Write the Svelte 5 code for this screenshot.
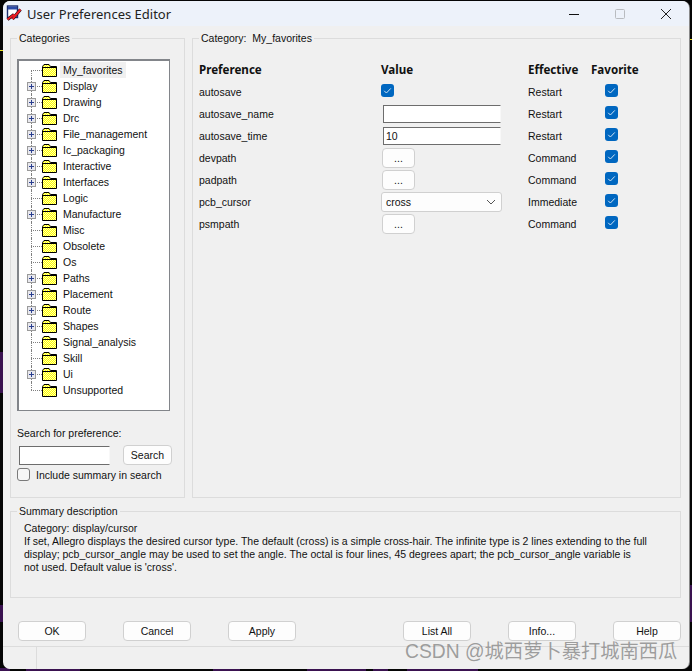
<script lang="ts">
	const categories = [
		{ name: 'My_favorites', expandable: false, selected: true },
		{ name: 'Display', expandable: true },
		{ name: 'Drawing', expandable: true },
		{ name: 'Drc', expandable: true },
		{ name: 'File_management', expandable: true },
		{ name: 'Ic_packaging', expandable: true },
		{ name: 'Interactive', expandable: true },
		{ name: 'Interfaces', expandable: true },
		{ name: 'Logic', expandable: false },
		{ name: 'Manufacture', expandable: true },
		{ name: 'Misc', expandable: false },
		{ name: 'Obsolete', expandable: false },
		{ name: 'Os', expandable: false },
		{ name: 'Paths', expandable: true },
		{ name: 'Placement', expandable: true },
		{ name: 'Route', expandable: true },
		{ name: 'Shapes', expandable: true },
		{ name: 'Signal_analysis', expandable: false },
		{ name: 'Skill', expandable: false },
		{ name: 'Ui', expandable: true },
		{ name: 'Unsupported', expandable: false }
	];

	const prefs = [
		{ name: 'autosave', kind: 'check', effective: 'Restart' },
		{ name: 'autosave_name', kind: 'text', value: '', effective: 'Restart' },
		{ name: 'autosave_time', kind: 'text', value: '10', effective: 'Restart' },
		{ name: 'devpath', kind: 'browse', effective: 'Command' },
		{ name: 'padpath', kind: 'browse', effective: 'Command' },
		{ name: 'pcb_cursor', kind: 'select', value: 'cross', effective: 'Immediate' },
		{ name: 'psmpath', kind: 'browse', effective: 'Command' }
	];
</script>

{#snippet checkmark()}
	<span class="check">
		<svg width="13" height="13" viewBox="0 0 13 13">
			<path d="M3.2 6.8 L5.4 9 L9.8 4.4" fill="none" stroke="#cfe3f5" stroke-width="1" />
		</svg>
	</span>
{/snippet}

<div class="desktop">
	<div class="window">
		<header class="titlebar">
			<svg class="app-icon" width="18" height="18" viewBox="0 0 18 18">
				<rect x="1.5" y="1" width="10" height="11.5" fill="#fff" stroke="#1c2f6e" stroke-width="1.4" />
				<rect x="2" y="1.5" width="9" height="3" fill="#2c4aa8" />
				<path d="M1.5 14.5 L8 9.5 M6.5 14 L14.5 4.5" fill="none" stroke="#1a1016" stroke-width="3.2" />
				<path d="M1.5 14.5 L8 9.5 M6.5 14 L14.5 4.5" fill="none" stroke="#ee1c24" stroke-width="2" />
			</svg>
			<span class="title">User Preferences Editor</span>
			<div class="controls">
				<svg width="12" height="12" viewBox="0 0 12 12"><path d="M1 6.5 H11" stroke="#111" stroke-width="1" /></svg>
				<svg width="12" height="12" viewBox="0 0 12 12"><rect x="1.5" y="1.5" width="9" height="9" rx="1" fill="none" stroke="#b9bcc0" /></svg>
				<svg width="12" height="12" viewBox="0 0 12 12"><path d="M1 1 L11 11 M11 1 L1 11" stroke="#222" stroke-width="1" /></svg>
			</div>
		</header>

		<main class="content">
			<div class="top">
				<fieldset class="group categories">
					<legend>Categories</legend>
					<div class="tree">
						{#each categories as cat, i}
							<div class="tree-row">
								<span class="gutter" class:last={i === categories.length - 1} class:first={i === 0}>
									{#if cat.expandable}
										<span class="plus">
											<svg width="9" height="9" viewBox="0 0 9 9">
												<path d="M2 4.5 H7 M4.5 2 V7" stroke="#2a3f8f" stroke-width="1" />
											</svg>
										</span>
									{/if}
								</span>
								<svg class="folder" width="15" height="13" viewBox="0 0 15 13">
									<defs>
										<pattern id={`dither-${i}`} width="2" height="2" patternUnits="userSpaceOnUse">
											<rect width="2" height="2" fill="#ffff00" />
											<rect width="1" height="1" fill="#ffffb0" />
											<rect x="1" y="1" width="1" height="1" fill="#ffffb0" />
										</pattern>
									</defs>
									<path d="M0.5 12.5 V2.5 L2 0.5 H7 L8.5 2.5 H14.5 V12.5 Z" fill={`url(#dither-${i})`} stroke="#000" stroke-width="1" />
									<path d="M1 3.5 H14" stroke="#000" stroke-width="1" />
								</svg>
								<span class="tree-label" class:selected={cat.selected}>{cat.name}</span>
							</div>
						{/each}
					</div>
					<label class="search-label" for="pref-search">Search for preference:</label>
					<div class="search-row">
						<input id="pref-search" class="sunken search-input" type="text" />
						<button class="btn search-btn">Search</button>
					</div>
					<div class="include">
						<span class="box"></span>
						<span>Include summary in search</span>
					</div>
				</fieldset>

				<fieldset class="group details">
					<legend>Category:&nbsp;&nbsp;My_favorites</legend>
					<div class="prefs">
						<b>Preference</b>
						<b>Value</b>
						<b>Effective</b>
						<b>Favorite</b>
						{#each prefs as pref}
							<span>{pref.name}</span>
							<span class="value">
								{#if pref.kind === 'check'}
									{@render checkmark()}
								{:else if pref.kind === 'text'}
									<input class="sunken value-input" type="text" value={pref.value} />
								{:else if pref.kind === 'browse'}
									<button class="btn dots">...</button>
								{:else}
									<span class="combo">
										{pref.value}
										<svg width="10" height="6" viewBox="0 0 10 6">
											<path d="M1 1 L5 5 L9 1" fill="none" stroke="#555" stroke-width="1" />
										</svg>
									</span>
								{/if}
							</span>
							<span>{pref.effective}</span>
							<span class="fav">{@render checkmark()}</span>
						{/each}
					</div>
				</fieldset>
			</div>

			<fieldset class="group summary">
				<legend>Summary description</legend>
				<p>Category: display/cursor</p>
				<p>If set, Allegro displays the desired cursor type. The default (cross) is a simple cross-hair. The infinite type is 2 lines extending to the full</p>
				<p>display; pcb_cursor_angle may be used to set the angle. The octal is four lines, 45 degrees apart; the pcb_cursor_angle variable is</p>
				<p>not used. Default value is 'cross'.</p>
			</fieldset>

			<div class="actions">
				<button class="btn">OK</button>
				<button class="btn">Cancel</button>
				<button class="btn">Apply</button>
				<button class="btn list-all">List All</button>
				<button class="btn">Info...</button>
				<button class="btn">Help</button>
			</div>
		</main>

		<footer class="statusbar">
			<span class="status-cell"></span>
		</footer>

		<span class="watermark">CSDN @城西萝卜暴打城南西瓜</span>
	</div>
</div>

<style>
	:global(body) {
		margin: 0;
		background: #050505;
	}

	.desktop {
		--purple: linear-gradient(#3a1250, #3a1250);
		--tick: linear-gradient(#e8e020, #e8e020);
		width: 692px;
		height: 671px;
		box-sizing: border-box;
		padding: 1px 2px 2px 3px;
		overflow: hidden;
		background:
			var(--tick) 0 50px / 3px 1px no-repeat,
			var(--tick) 690px 39px / 2px 1px no-repeat,
			var(--purple) 0 352px / 3px 41px no-repeat,
			var(--purple) 0 605px / 3px 17px no-repeat,
			var(--purple) 690px 585px / 2px 37px no-repeat,
			var(--purple) 0 668px / 10px 3px no-repeat,
			var(--purple) 26px 669px / 54px 2px no-repeat,
			var(--purple) 213px 669px / 27px 2px no-repeat,
			var(--purple) 307px 669px / 59px 2px no-repeat,
			var(--purple) 373px 669px / 15px 2px no-repeat,
			var(--purple) 407px 669px / 71px 2px no-repeat,
			#050505;
	}

	.window {
		position: relative;
		height: 668px;
		width: 686px;
		display: flex;
		flex-direction: column;
		background: #f0f0f0;
		border-radius: 7px;
		box-shadow: 1px 0 0 #8a8a8a;
		font-family: 'Liberation Sans', 'Noto Sans CJK SC', sans-serif;
		font-size: 10.5px;
		color: #111;
	}

	.titlebar {
		height: 25px;
		flex: none;
		display: flex;
		align-items: center;
		background: #edf2fa;
		border-radius: 7px 7px 0 0;
		padding-left: 3px;
		font-family: 'Noto Sans', sans-serif;
	}

	.app-icon {
		flex: none;
	}

	.title {
		margin-left: 3px;
		font-size: 13px;
		color: #222;
	}

	.controls {
		margin-left: auto;
		display: flex;
		gap: 34px;
		padding-right: 17px;
		align-items: center;
	}

	.content {
		flex: 1;
		display: flex;
		flex-direction: column;
		padding: 4px 8px 0 7px;
	}

	.top {
		display: flex;
		gap: 7px;
		height: 468px;
	}

	.group {
		margin: 0;
		border: 1px solid #dcdcdc;
		min-width: 0;
		box-sizing: border-box;
	}

	legend {
		padding: 0 2px;
		margin-left: 0;
		line-height: 16px;
	}

	.categories {
		width: 175px;
		padding: 13px 0 0 6px;
	}

	.tree {
		width: 150px;
		height: 348px;
		padding-top: 1px;
		border: 2px solid #82858a;
		border-right-width: 1px;
		border-bottom-width: 1px;
		background: #fff;
		box-sizing: content-box;
	}

	.tree-row {
		height: 16px;
		display: flex;
		align-items: center;
	}

	.gutter {
		position: relative;
		width: 22px;
		height: 16px;
		margin-left: 1px;
		flex: none;
	}

	.gutter::before {
		content: '';
		position: absolute;
		left: 11px;
		top: 0;
		bottom: 0;
		border-left: 1px dotted #808080;
	}

	.gutter.first::before {
		top: 8px;
	}

	.gutter.last::before {
		bottom: 8px;
	}

	.gutter::after {
		content: '';
		position: absolute;
		left: 11px;
		right: 0;
		top: 8px;
		border-top: 1px dotted #808080;
	}

	.plus {
		position: absolute;
		z-index: 1;
		left: 7px;
		top: 4px;
		width: 9px;
		height: 9px;
		box-sizing: border-box;
		border: 1px solid #9a9a9a;
		background: #e8e8ee;
		display: flex;
		align-items: center;
		justify-content: center;
	}

	.plus svg {
		flex: none;
		margin: -1px;
	}

	.folder {
		flex: none;
	}

	.tree-label {
		margin-left: 3px;
		padding: 0 3px;
		line-height: 16px;
	}

	.tree-label.selected {
		background: #f0f0f0;
	}

	.search-label {
		display: block;
		margin-top: 16px;
	}

	.search-row {
		display: flex;
		align-items: center;
		gap: 13px;
		margin-top: 6px;
	}

	.sunken {
		box-sizing: border-box;
		background: #fff;
		border: 1px solid #f8f8f8;
		border-top-color: #6d6d6d;
		border-left-color: #6d6d6d;
		border-bottom-color: #6d6d6d;
		font: inherit;
		color: inherit;
		outline: none;
		padding: 0 2px;
	}

	.search-input {
		width: 91px;
		height: 19px;
		margin-left: 2px;
	}

	.btn {
		box-sizing: border-box;
		width: 68px;
		height: 20px;
		padding: 0;
		background: #fdfdfd;
		border: 1px solid #d0d0d0;
		border-radius: 4px;
		font: inherit;
		color: inherit;
	}

	.search-btn {
		width: 49px;
	}

	.include {
		display: flex;
		align-items: center;
		gap: 6px;
		margin-top: 3px;
	}

	.box {
		width: 13px;
		height: 13px;
		box-sizing: border-box;
		border: 1px solid #7a7a7a;
		border-radius: 3px;
		background: #f6f6f6;
	}

	.details {
		flex: 1;
		padding: 0 0 0 6px;
	}

	.prefs {
		display: grid;
		grid-template-columns: 182px 147px 63px 80px;
		grid-template-rows: 21px 23px;
		grid-auto-rows: 22px;
		align-items: center;
		margin-top: 13px;
	}

	.prefs b {
		font-family: 'Noto Sans', sans-serif;
		font-size: 11.6px;
		line-height: 20px;
	}

	.value {
		display: flex;
		align-items: center;
	}

	.value-input {
		width: 118px;
		height: 18px;
		margin-left: 2px;
	}

	.dots {
		width: 33px;
		margin-left: 1px;
	}

	.combo {
		box-sizing: border-box;
		width: 121px;
		height: 20px;
		display: flex;
		align-items: center;
		justify-content: space-between;
		padding: 0 5px 0 4px;
		background: #fdfdfd;
		border: 1px solid #d0d0d0;
		border-radius: 3px;
	}

	.check {
		width: 13px;
		height: 13px;
		display: block;
		margin-bottom: 3px;
		background: #0067c0;
		border-radius: 3px;
	}

	.check svg {
		display: block;
	}

	.fav {
		padding-left: 14px;
	}

	.summary {
		height: 95px;
		margin-top: 5px;
		padding: 3px 0 0 13px;
	}

	.summary legend {
		margin-left: -7px;
	}

	.summary p {
		margin: 0;
		line-height: 13px;
		white-space: nowrap;
	}

	.actions {
		display: flex;
		gap: 37px;
		margin-top: 23px;
		padding-left: 8px;
	}

	.list-all {
		margin-left: 70px;
	}

	.statusbar {
		height: 22px;
		flex: none;
		border-top: 1px solid #dcdcdc;
	}

	.status-cell {
		display: block;
		width: 33px;
		height: 100%;
		border-right: 1px solid #dcdcdc;
	}

	.watermark {
		position: absolute;
		left: 402px;
		top: 639px;
		font-size: 19.3px;
		line-height: 24px;
		color: rgba(120, 120, 120, 0.7);
		white-space: nowrap;
	}
</style>
